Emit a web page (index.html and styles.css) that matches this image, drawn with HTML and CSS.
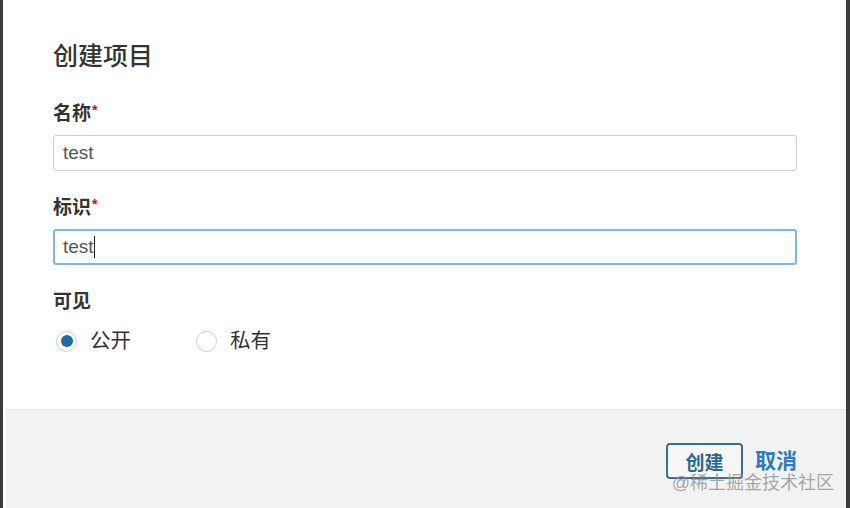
FILE: index.html
```html
<!DOCTYPE html>
<html lang="zh">
<head>
<meta charset="utf-8">
<title>创建项目</title>
<link rel="stylesheet" href="styles.css">
</head>
<body>
<div class="modal">
  <div class="modal-body">
    <h1 class="title">创建项目</h1>
    <div class="field">
      <div class="label">名称<span class="req">*</span></div>
      <div class="input">test</div>
    </div>
    <div class="field">
      <div class="label">标识<span class="req">*</span></div>
      <div class="input focus">test<span class="caret"></span></div>
    </div>
    <div class="field">
      <div class="label">可见</div>
      <div class="radios">
        <div class="option"><span class="radio checked"></span><span class="opt-text">公开</span></div>
        <div class="option"><span class="radio"></span><span class="opt-text">私有</span></div>
      </div>
    </div>
  </div>
  <div class="modal-footer">
    <button class="btn">创建</button>
    <a class="link">取消</a>
    <span class="watermark">@稀土掘金技术社区</span>
  </div>
</div>
</body>
</html>
```
FILE: styles.css
```css
* { box-sizing: border-box; }
html, body { height: 100%; }
body {
  margin: 0;
  background: #3b3b3b;
  font-family: "Liberation Sans", "Noto Sans CJK SC", sans-serif;
  color: #333;
  display: flex;
  padding: 0 4px 0 3px;
}
.modal {
  flex: 1;
  background: #fff;
  display: flex;
  flex-direction: column;
}
.modal-body {
  padding: 40px 49px 56px 50px;
}
.title {
  margin: 0 0 30px;
  font-size: 25px;
  line-height: 32px;
  font-weight: 500;
  color: #333;
}
.field { margin-bottom: 25px; }
.field:last-child { margin-bottom: 0; }
.label {
  font-size: 19px;
  line-height: 24px;
  font-weight: bold;
  margin-bottom: 9px;
  color: #333;
}
.req {
  color: #b0122a;
  font-size: 14px;
  vertical-align: top;
  line-height: 16px;
  margin-left: 1px;
}
.input {
  height: 36px;
  border: 1px solid #cfcfcf;
  border-radius: 3px;
  padding: 0 9px;
  font-size: 19px;
  line-height: 34px;
  color: #555;
  display: flex;
  align-items: center;
}
.input.focus { border: 2px solid #7eb6dc; padding: 0 8px; }
.caret {
  display: inline-block;
  width: 1px;
  height: 22px;
  background: #222;
}
.radios {
  display: flex;
  margin-top: 15px;
  padding-left: 3px;
  height: 24px;
}
.option {
  width: 140px;
  display: flex;
  align-items: center;
}
.radio {
  width: 21px;
  height: 21px;
  border-radius: 50%;
  border: 1px solid #cdcdcd;
  background: #fff;
  display: flex;
  align-items: center;
  justify-content: center;
}
.radio.checked::after {
  content: "";
  width: 12px;
  height: 12px;
  border-radius: 50%;
  background: #1f6aa0;
}
.opt-text {
  margin-left: 13px;
  font-size: 20.5px;
  line-height: 24px;
  color: #333;
}
.modal-footer {
  flex: 1;
  margin-left: 3px;
  background: #f2f2f2;
  border-top: 1px solid #e8e8e8;
  padding: 33px 49px 0 0;
  display: flex;
  justify-content: flex-end;
  align-items: flex-start;
  position: relative;
}
.btn {
  width: 77px;
  height: 36px;
  border: 2px solid #3f6f90;
  border-radius: 4px;
  background: #f6f6f6;
  font-family: inherit;
  font-size: 19px;
  font-weight: bold;
  color: #2b6797;
  padding: 0;
}
.link {
  margin-left: 12px;
  font-size: 21px;
  line-height: 36px;
  font-weight: bold;
  color: #2d7bbb;
}
.watermark {
  position: absolute;
  right: 12px;
  top: 63px;
  font-size: 18px;
  line-height: 20px;
  color: rgba(140, 140, 140, 0.75);
}
```
